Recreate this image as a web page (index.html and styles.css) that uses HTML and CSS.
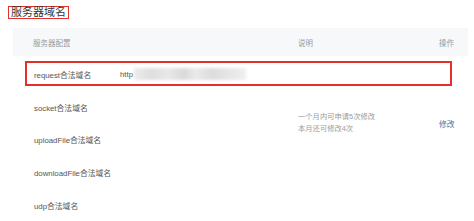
FILE: index.html
```html
<!DOCTYPE html>
<html lang="zh-CN">
<head>
<meta charset="utf-8">
<link rel="stylesheet" href="styles.css">
</head>
<body>
<div class="page">
  <div class="title">服务器域名</div>
  <div class="table">
    <div class="thead">
      <div class="th th-a">服务器配置</div>
      <div class="th th-c">说明</div>
      <div class="th th-d">操作</div>
    </div>
    <div class="tbody">
      <div class="highlight"></div>
      <div class="cell label r1">request合法域名</div>
      <div class="cell value r1"><span>http</span><span class="blur"></span></div>
      <div class="cell label r2">socket合法域名</div>
      <div class="cell label r3">uploadFile合法域名</div>
      <div class="cell label r4">downloadFile合法域名</div>
      <div class="cell label r5">udp合法域名</div>
      <div class="cell desc">一个月内可申请5次修改<br>本月还可修改4次</div>
      <div class="cell op"><span class="link">修改</span></div>
    </div>
  </div>
</div>
</body>
</html>
```
FILE: styles.css
```css
html, body {
  margin: 0;
  padding: 0;
  background: #ffffff;
}
body {
  font-family: "Liberation Sans", "Noto Sans CJK SC", sans-serif;
  color: #555555;
  width: 474px;
  height: 221px;
  overflow: hidden;
}
.page {
  padding: 2px 0 0 0;
}
.title {
  display: inline-block;
  margin-left: 8px;
  border: 1.5px solid #e0312c;
  font-size: 11px;
  line-height: 11px;
  padding: 0 2px 0 2px;
  color: #333333;
}
.table {
  margin: 8px 0 0 13px;
  width: 455px;
}
.thead {
  display: grid;
  grid-template-columns: 285px 141px 29px;
  height: 28px;
  align-items: center;
  background: #f6f8f9;
  font-size: 7.5px;
  color: #9a9a9a;
}
.th-a { padding-left: 20px; }
.tbody {
  position: relative;
  display: grid;
  grid-template-columns: 107px 178px 141px 29px;
  grid-template-rows: repeat(5, 32.7px);
  padding-top: 2px;
  font-size: 7.8px;
  align-items: center;
}
.cell.label { grid-column: 1; padding-left: 21px; white-space: nowrap; }
.r1 { grid-row: 1; }
.r2 { grid-row: 2; }
.r3 { grid-row: 3; }
.r4 { grid-row: 4; }
.r5 { grid-row: 5; }
.value {
  grid-column: 2;
  display: flex;
  align-items: center;
}
.blur {
  display: inline-block;
  width: 112px;
  height: 12px;
  margin-left: 1px;
  background: linear-gradient(90deg, #ececec 0%, #dedede 15%, #e8e8e8 30%, #d9d9d9 45%, #eaeaea 55%, #dcdcdc 70%, #e6e6e6 85%, #efefef 100%);
  filter: blur(1.5px);
}
.desc {
  grid-column: 3;
  grid-row: 1 / 5;
  font-size: 7.3px;
  line-height: 12px;
  color: #9b9b9b;
}
.op {
  grid-column: 4;
  grid-row: 1 / 5;
}
.link {
  color: #5b6f96;
  font-size: 7.8px;
}
.highlight {
  position: absolute;
  left: 12px;
  top: 5px;
  width: 423px;
  height: 21px;
  border: 2px solid #e0312c;
  pointer-events: none;
}
```
